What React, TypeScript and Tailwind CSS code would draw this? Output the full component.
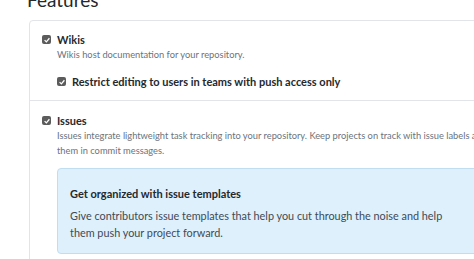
import React from 'react';

const font = { fontFamily: 'Lato, "Open Sans", sans-serif' };

function Check({ className = '' }: { className?: string }) {
    return (
        <span className={`inline-flex w-[9px] h-[9px] shrink-0 items-center justify-center rounded-[2px] bg-[#5c5c5c] ${className}`}>
            <svg viewBox="0 0 10 10" className="w-[8px] h-[8px]">
                <path d="M2 5.2 L4.2 7.3 L8 2.8" fill="none" stroke="#fff" strokeWidth="1.6" />
            </svg>
        </span>
    );
}

export default function App() {
    return (
        <div className="w-[474px] h-[259px] overflow-hidden bg-white text-[#24292e]" style={font}>
            <h2 className="ml-[27px] mt-[-15px] h-[30px] text-[19px] leading-[30px] font-normal text-[#24292e]">Features</h2>

            <div className="ml-[29px] mt-[5px] w-[520px] rounded-[4px] border border-[#e1e4e8]">
                {/* Wikis */}
                <div className="pl-[12px] pt-[14px] pb-[14px] border-b border-[#e1e4e8]">
                    <div className="flex items-center gap-[6px] h-[9px]">
                        <Check />
                        <span className="text-[11px] font-bold leading-none">Wikis</span>
                    </div>
                    <p className="ml-[15px] mt-[3px] text-[9.3px] leading-[15px] text-[#6a737d]">
                        Wikis host documentation for your repository.
                    </p>
                    <div className="ml-[15px] mt-[15px] flex items-center gap-[6px] h-[9px]">
                        <Check />
                        <span className="text-[11px] font-bold leading-none">Restrict editing to users in teams with push access only</span>
                    </div>
                </div>

                {/* Issues */}
                <div className="pl-[12px] pt-[15px] pb-[10px]">
                    <div className="flex items-center gap-[6px] h-[9px]">
                        <Check />
                        <span className="text-[11px] font-bold leading-none">Issues</span>
                    </div>
                    <p className="ml-[15px] mt-[3px] text-[9.3px] leading-[15px] text-[#6a737d] whitespace-nowrap">
                        Issues integrate lightweight task tracking into your repository. Keep projects on track with issue labels and milestones, and reference
                        <br />
                        them in commit messages.
                    </p>

                    <div className="ml-[15px] mt-[10px] h-[86px] rounded-[4px] border border-[#c0ddf2] bg-[#def0fc] pl-[12px] pt-[17px]">
                        <h3 className="text-[11px] font-bold leading-[16px] text-[#24292e]">Get organized with issue templates</h3>
                        <p className="mt-[5px] text-[10.85px] leading-[17px] text-[#3f4a55]">
                            Give contributors issue templates that help you cut through the noise and help
                            <br />
                            them push your project forward.
                        </p>
                    </div>
                </div>
            </div>
        </div>
    );
}
